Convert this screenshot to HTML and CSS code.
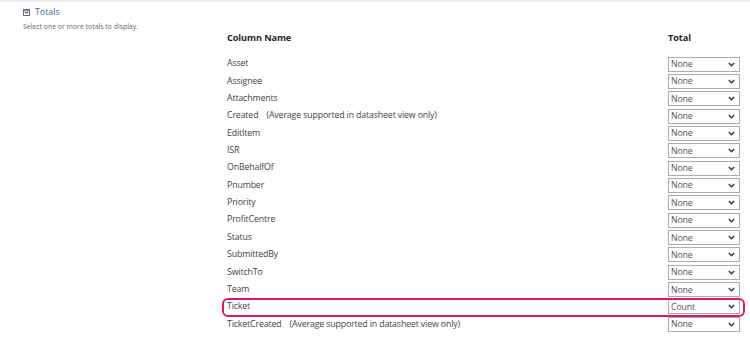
FILE: index.html
```html
<!DOCTYPE html>
<html>
<head>
<meta charset="utf-8">
<link rel="stylesheet" href="styles.css">
</head>
<body>
<div class="page">
  <div class="section-head">
    <svg class="toggle" width="7" height="7" viewBox="0 0 7 7"><rect x="0.5" y="0.5" width="6" height="6" fill="#fff" stroke="#5a6a7a"/><rect x="1" y="1" width="5" height="1.5" fill="#8a9aaa"/><rect x="1.8" y="3.2" width="3.4" height="1" fill="#3a4a5a"/></svg>
    <span class="section-title">Totals</span>
  </div>
  <div class="section-body">
    <div class="desc">Select one or more totals to display.</div>
    <div class="grid">
      <div class="hd">Column Name</div>
      <div class="hd">Total</div>

      <div class="name">Asset</div><div class="cell"><span class="sel">None<svg class="chev" width="7" height="5" viewBox="0 0 7 5"><path d="M0.8 1 L3.5 3.8 L6.2 1" fill="none" stroke="#333" stroke-width="1.3"/></svg></span></div>
      <div class="name">Assignee</div><div class="cell"><span class="sel">None<svg class="chev" width="7" height="5" viewBox="0 0 7 5"><path d="M0.8 1 L3.5 3.8 L6.2 1" fill="none" stroke="#333" stroke-width="1.3"/></svg></span></div>
      <div class="name">Attachments</div><div class="cell"><span class="sel">None<svg class="chev" width="7" height="5" viewBox="0 0 7 5"><path d="M0.8 1 L3.5 3.8 L6.2 1" fill="none" stroke="#333" stroke-width="1.3"/></svg></span></div>
      <div class="name">Created <span class="note">(Average supported in datasheet view only)</span></div><div class="cell"><span class="sel">None<svg class="chev" width="7" height="5" viewBox="0 0 7 5"><path d="M0.8 1 L3.5 3.8 L6.2 1" fill="none" stroke="#333" stroke-width="1.3"/></svg></span></div>
      <div class="name">EditItem</div><div class="cell"><span class="sel">None<svg class="chev" width="7" height="5" viewBox="0 0 7 5"><path d="M0.8 1 L3.5 3.8 L6.2 1" fill="none" stroke="#333" stroke-width="1.3"/></svg></span></div>
      <div class="name">ISR</div><div class="cell"><span class="sel">None<svg class="chev" width="7" height="5" viewBox="0 0 7 5"><path d="M0.8 1 L3.5 3.8 L6.2 1" fill="none" stroke="#333" stroke-width="1.3"/></svg></span></div>
      <div class="name">OnBehalfOf</div><div class="cell"><span class="sel">None<svg class="chev" width="7" height="5" viewBox="0 0 7 5"><path d="M0.8 1 L3.5 3.8 L6.2 1" fill="none" stroke="#333" stroke-width="1.3"/></svg></span></div>
      <div class="name">Pnumber</div><div class="cell"><span class="sel">None<svg class="chev" width="7" height="5" viewBox="0 0 7 5"><path d="M0.8 1 L3.5 3.8 L6.2 1" fill="none" stroke="#333" stroke-width="1.3"/></svg></span></div>
      <div class="name">Priority</div><div class="cell"><span class="sel">None<svg class="chev" width="7" height="5" viewBox="0 0 7 5"><path d="M0.8 1 L3.5 3.8 L6.2 1" fill="none" stroke="#333" stroke-width="1.3"/></svg></span></div>
      <div class="name">ProfitCentre</div><div class="cell"><span class="sel">None<svg class="chev" width="7" height="5" viewBox="0 0 7 5"><path d="M0.8 1 L3.5 3.8 L6.2 1" fill="none" stroke="#333" stroke-width="1.3"/></svg></span></div>
      <div class="name">Status</div><div class="cell"><span class="sel">None<svg class="chev" width="7" height="5" viewBox="0 0 7 5"><path d="M0.8 1 L3.5 3.8 L6.2 1" fill="none" stroke="#333" stroke-width="1.3"/></svg></span></div>
      <div class="name">SubmittedBy</div><div class="cell"><span class="sel">None<svg class="chev" width="7" height="5" viewBox="0 0 7 5"><path d="M0.8 1 L3.5 3.8 L6.2 1" fill="none" stroke="#333" stroke-width="1.3"/></svg></span></div>
      <div class="name">SwitchTo</div><div class="cell"><span class="sel">None<svg class="chev" width="7" height="5" viewBox="0 0 7 5"><path d="M0.8 1 L3.5 3.8 L6.2 1" fill="none" stroke="#333" stroke-width="1.3"/></svg></span></div>
      <div class="name">Team</div><div class="cell"><span class="sel">None<svg class="chev" width="7" height="5" viewBox="0 0 7 5"><path d="M0.8 1 L3.5 3.8 L6.2 1" fill="none" stroke="#333" stroke-width="1.3"/></svg></span></div>
      <div class="name hl">Ticket</div><div class="cell"><span class="sel">Count<svg class="chev" width="7" height="5" viewBox="0 0 7 5"><path d="M0.8 1 L3.5 3.8 L6.2 1" fill="none" stroke="#333" stroke-width="1.3"/></svg></span></div>
      <div class="name">TicketCreated <span class="note">(Average supported in datasheet view only)</span></div><div class="cell"><span class="sel">None<svg class="chev" width="7" height="5" viewBox="0 0 7 5"><path d="M0.8 1 L3.5 3.8 L6.2 1" fill="none" stroke="#333" stroke-width="1.3"/></svg></span></div>
    </div>
  </div>
</div>
</body>
</html>
```

FILE: styles.css
```css
html, body {
  margin: 0;
  padding: 0;
  background: #fff;
}
body {
  font-family: "Open Sans", "Noto Sans", sans-serif;
  color: #444;
  width: 750px;
  height: 338px;
  overflow: hidden;
}
.page {
  border-top: 2px solid #ececec;
}
.section-head {
  display: flex;
  align-items: center;
  gap: 5px;
  padding: 3px 0 0 23px;
  height: 14px;
}
.toggle {
  display: block;
}
.section-title {
  font-size: 8.8px;
  color: #2a72a8;
}
.section-body {
  display: flex;
  padding-top: 2px;
}
.desc {
  width: 204px;
  padding-left: 23px;
  font-size: 6.9px;
  color: #666;
  line-height: 12px;
}
.grid {
  display: grid;
  grid-template-columns: 441px 72px;
  grid-template-rows: 25.4px;
  grid-auto-rows: 17.35px;
  padding-top: 9px;
  font-size: 8.8px;
  letter-spacing: -0.15px;
}
.hd {
  font-weight: 700;
  color: #262626;
  font-size: 9.2px;
  letter-spacing: -0.1px;
  line-height: 16px;
}
.name {
  line-height: 17.35px;
  white-space: nowrap;
  position: relative;
}
.note {
  margin-left: 6px;
}
.hl::after {
  content: "";
  position: absolute;
  left: -5px;
  top: 0;
  width: 519px;
  height: 15px;
  border: 2px solid #e6136b;
  border-radius: 6px;
}
.cell {
  display: flex;
  align-items: center;
}
.sel {
  box-sizing: border-box;
  display: flex;
  align-items: center;
  justify-content: space-between;
  width: 72px;
  height: 15px;
  border: 1px solid #ababab;
  padding: 0 4px 0 2px;
  color: #555;
  font-size: 8.8px;
  background: #fff;
}
.chev {
  display: block;
}
```
